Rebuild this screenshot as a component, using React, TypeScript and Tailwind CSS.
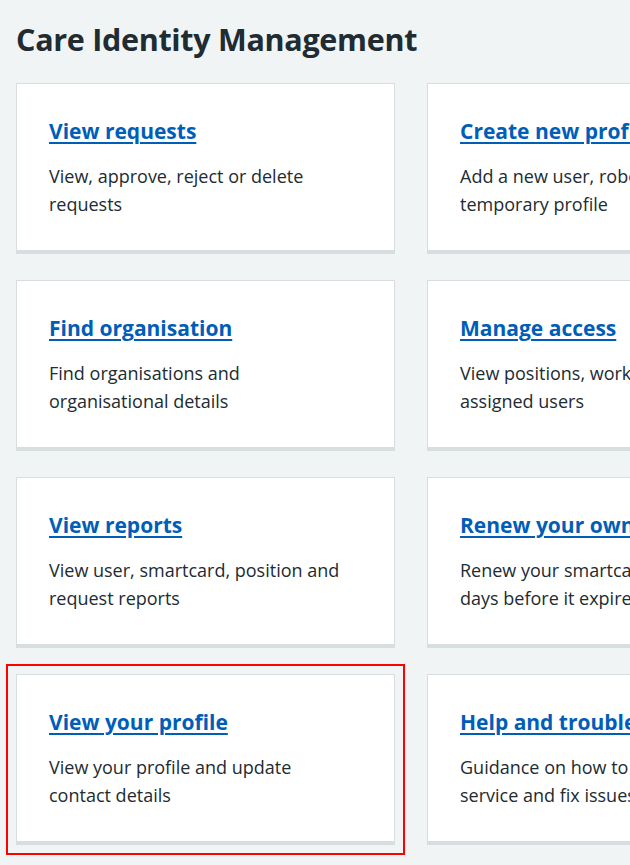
const cards: [string, string][] = [
  ["View requests", "View, approve, reject or delete requests"],
  ["Create new profile", "Add a new user, robot or temporary profile"],
  ["Find organisation", "Find organisations and organisational details"],
  ["Manage access", "View positions, workgroups and assigned users"],
  ["View reports", "View user, smartcard, position and request reports"],
  ["Renew your own smartcard", "Renew your smartcard up to 90 days before it expires"],
  ["View your profile", "View your profile and update contact details"],
  ["Help and troubleshooting", "Guidance on how to use this service and fix issues"],
];

export default function App() {
  return (
    <div className="w-[630px] h-[865px] overflow-hidden bg-[#f0f4f5] text-[#212b32]" style={{ fontFamily: '"Open Sans", "Noto Sans", sans-serif' }}>
      <h1 className="px-[16px] pt-[17px] text-[30.5px] leading-[44px] font-bold tracking-[-0.3px]">Care Identity Management</h1>
      <div className="grid grid-cols-[379px_379px] gap-x-[32px] gap-y-[26px] pl-[16px] pt-[22px] w-[900px]">
        {cards.map(([t, d], i) => (
          <div
            key={t}
            className={`bg-white border border-[#d8dde0] border-b-4 h-[171px] px-[32px] pt-[31px] ${i === 6 ? "outline-2 outline-[#ff0000] outline-offset-[8px]" : ""}`}
          >
            <a href="#" className="block text-[21px] leading-[32px] font-bold text-[#005eb8] underline underline-offset-[3px] decoration-2 whitespace-nowrap">{t}</a>
            <p className="mt-[15px] text-[18px] leading-[28px] w-[300px]">{d}</p>
          </div>
        ))}
      </div>
    </div>
  );
}
